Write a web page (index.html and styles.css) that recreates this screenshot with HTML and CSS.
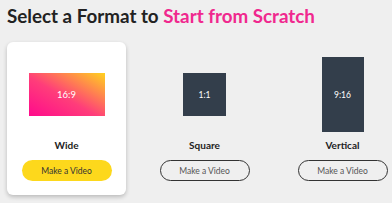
FILE: index.html
```html
<!DOCTYPE html>
<html>
<head>
<meta charset="utf-8">
<link rel="stylesheet" href="styles.css">
</head>
<body>
<div class="page">
  <h1 class="title">Select a Format to <span class="accent">Start from Scratch</span></h1>
  <div class="formats">
    <div class="format selected">
      <div class="media"><div class="frame wide">16:9</div></div>
      <div class="label">Wide</div>
      <button class="btn primary">Make a Video</button>
    </div>
    <div class="format">
      <div class="media"><div class="frame square">1:1</div></div>
      <div class="label">Square</div>
      <button class="btn outline">Make a Video</button>
    </div>
    <div class="format">
      <div class="media"><div class="frame vertical">9:16</div></div>
      <div class="label">Vertical</div>
      <button class="btn outline">Make a Video</button>
    </div>
  </div>
</div>
</body>
</html>
```

FILE: styles.css
```css
* { box-sizing: border-box; }
html, body {
  margin: 0;
  padding: 0;
  background: #efefef;
  font-family: "Lato", "Open Sans", "Liberation Sans", sans-serif;
  color: #222;
}
.page {
  width: 392px;
  height: 203px;
  padding: 4px 7px 0 7px;
  overflow: hidden;
}
.title {
  margin: 0;
  font-size: 18.8px;
  font-weight: 700;
  line-height: 24px;
  color: #222;
}
.accent { color: #f0288e; }
.formats {
  display: grid;
  grid-template-columns: 119px 119px 119px;
  column-gap: 19px;
  margin-top: 14px;
}
.format {
  height: 153px;
  border-radius: 6px;
  display: flex;
  flex-direction: column;
  align-items: center;
  padding-top: 15px;
}
.format.selected {
  background: #fff;
  box-shadow: 0 2px 4px rgba(0,0,0,0.22);
}
.media {
  height: 75px;
  display: flex;
  align-items: center;
  justify-content: center;
}
.frame {
  display: flex;
  align-items: center;
  justify-content: center;
  color: #fff;
  font-size: 8.5px;
  background: #333e4b;
}
.frame.wide {
  width: 76px;
  height: 43px;
  background: linear-gradient(30deg, #ff0a8c 0%, #ff3d7a 45%, #ffd21e 100%);
  font-size: 9.5px;
}
.frame.square { width: 43px; height: 43px; }
.frame.vertical { width: 42px; height: 75px; }
.label {
  margin-top: 7px;
  font-size: 10px;
  font-weight: 700;
  line-height: 12px;
  color: #222;
}
.btn {
  margin-top: 9px;
  width: 90px;
  height: 21px;
  border-radius: 11px;
  font-family: inherit;
  font-size: 8.5px;
  color: #333;
  padding: 0;
  cursor: pointer;
}
.btn.primary {
  background: #fdd81c;
  border: none;
}
.btn.outline {
  background: transparent;
  border: 1.5px solid #333;
  color: #555;
}
```
